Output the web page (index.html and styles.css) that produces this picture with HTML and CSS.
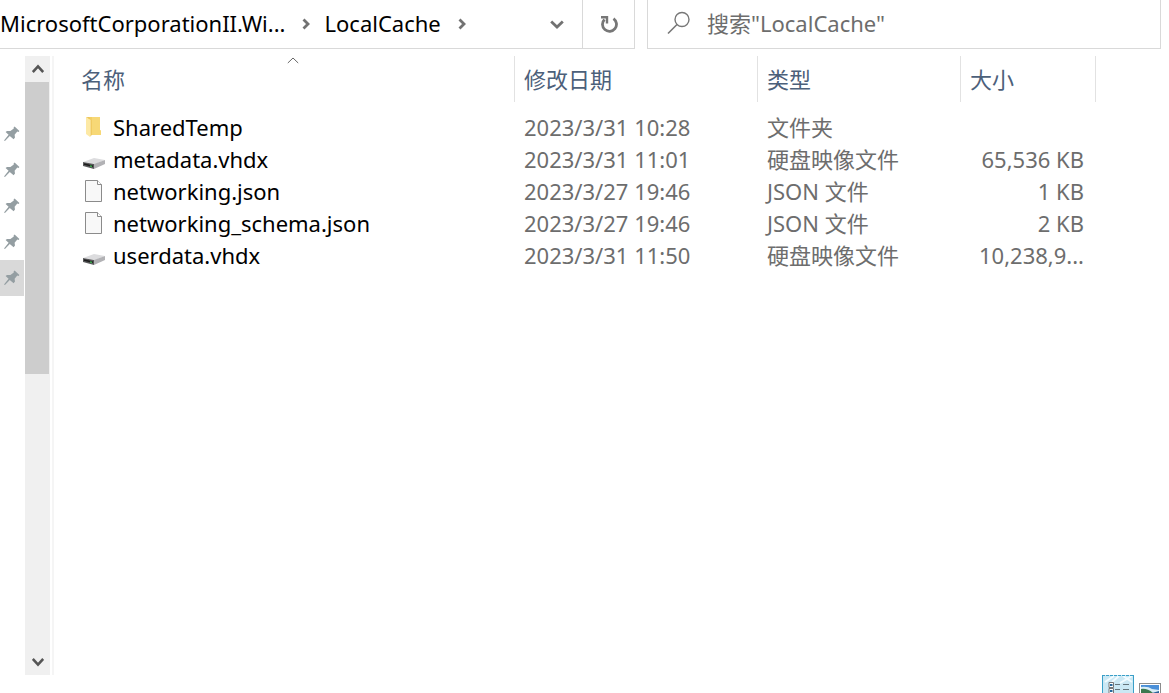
FILE: index.html
```html
<!DOCTYPE html>
<html lang="zh-CN">
<head>
  <meta charset="UTF-8" />
  <meta name="viewport" content="width=device-width, initial-scale=1.0" />
  <title>LocalCache</title>
  <link rel="stylesheet" href="styles.css">
</head>
<body>
  <!-- shared icons -->
  <svg class="sprite" aria-hidden="true">
    <symbol id="pin" viewBox="0 0 16 16">
      <path d="M10.6 0.6 L15.4 5 L14.6 6 L13.3 5.6 L10.6 8.8 L11 11.6 L9.6 13.2 L5.8 9.9 L1.2 14.8 L0.2 15 L0.4 14 L4.6 8.8 L1.6 5.9 L3 4.9 L6.4 5 L9.8 2.6 L9.6 1.4 Z" fill="#949ea2"/>
    </symbol>
    <symbol id="folder" viewBox="0 0 22 22">
      <path d="M5 1 H17 V14 L18 15 V19 H8 L5 18 Z" fill="#f3cf65"/>
      <path d="M9 1 H17 V14 L18 15 V19 H9 Z" fill="#f7d876"/>
      <path d="M3 1 L8 4 V20 L7 21 L3 18 Z" fill="#fde9a5"/>
      <path d="M8 4 V20" stroke="#e9c058" stroke-width=".6"/>
      <path d="M3 1 H6 L8 4 Z" fill="#edc65c"/>
    </symbol>
    <symbol id="drive" viewBox="0 0 22 22">
      <path d="M0 14 L11 10 L22 12 L12 16 Z" fill="#dcdcde"/>
      <path d="M11 16 L22 12 V16 L11 21 Z" fill="#b2b2b5"/>
      <path d="M0 14 L11 16 V21 L0 18 Z" fill="#58585a"/>
      <path d="M1 16 L10 18.200" stroke="#1c1c1c" stroke-width="1.6"/>
      <path d="M7 18 L9 18.500" stroke="#3fae4f" stroke-width="1.3"/>
    </symbol>
    <symbol id="file" viewBox="0 0 22 22">
      <path d="M2.5 .5 H14.5 L18.5 4.5 V21.5 H2.5 Z" fill="#f8f8f8" stroke="#8b8b8b"/>
      <path d="M14.5 .5 V4.5 H18.5" fill="#fff" stroke="#8b8b8b"/>
    </symbol>
  </svg>

  <div class="toolbar">
    <nav class="address">
      <button class="crumb">MicrosoftCorporationII.Wi...</button>
      <svg class="crumb-arrow" width="8" height="12" viewBox="0 0 8 12"><path d="M1.5 1.5 L6 6 L1.5 10.5" fill="none" stroke="#727272" stroke-width="2.8"/></svg>
      <button class="crumb">LocalCache</button>
      <svg class="crumb-arrow" width="8" height="12" viewBox="0 0 8 12"><path d="M1.5 1.5 L6 6 L1.5 10.5" fill="none" stroke="#727272" stroke-width="2.8"/></svg>
      <button class="history" aria-label="以前的位置">
        <svg width="14" height="9" viewBox="0 0 14 9"><path d="M1.2 1.5 L7 7 L12.8 1.5" fill="none" stroke="#727272" stroke-width="2.8"/></svg>
      </button>
      <button class="refresh" aria-label="刷新">
        <svg width="18" height="18" viewBox="0 0 18 18"><path d="M13.5 3.6 A7 7 0 1 1 4.500 4.400" fill="none" stroke="#777" stroke-width="2.8"/><path d="M1 2.200 H7 V8.400" fill="none" stroke="#777" stroke-width="2.4"/></svg>
      </button>
    </nav>
    <label class="search">
      <svg width="24" height="24" viewBox="0 0 24 24"><circle cx="15" cy="8.5" r="7" fill="none" stroke="#777" stroke-width="1.4"/><path d="M10 13.5 L1 22.5" stroke="#777" stroke-width="1.6"/></svg>
      <input class="search-box" type="text" placeholder="搜索&quot;LocalCache&quot;" aria-label="搜索">
    </label>
  </div>

  <div class="content">
    <ul class="pins">
      <li class="pin"><svg width="16" height="16"><use href="#pin"/></svg></li>
      <li class="pin"><svg width="16" height="16"><use href="#pin"/></svg></li>
      <li class="pin"><svg width="16" height="16"><use href="#pin"/></svg></li>
      <li class="pin"><svg width="16" height="16"><use href="#pin"/></svg></li>
      <li class="pin selected"><svg width="16" height="16"><use href="#pin"/></svg></li>
    </ul>
    <div class="scrollbar">
      <button class="scroll-btn" aria-label="向上滚动">
        <svg width="12" height="10" viewBox="0 0 12 10"><path d="M.8 8 L6 2.4 L11.2 8" fill="none" stroke="#555" stroke-width="2.6"/></svg>
      </button>
      <div class="track"><div class="thumb"></div></div>
      <button class="scroll-btn" aria-label="向下滚动">
        <svg width="12" height="10" viewBox="0 0 12 10"><path d="M.8 2 L6 7.6 L11.2 2" fill="none" stroke="#555" stroke-width="2.6"/></svg>
      </button>
    </div>

    <div class="list">
      <table class="files">
        <colgroup>
          <col class="col-name">
          <col class="col-date">
          <col class="col-type">
          <col class="col-size">
        </colgroup>
        <thead>
          <tr>
            <th>
              <svg class="sort" width="12" height="7" viewBox="0 0 12 7"><path d="M.8 6 L6 1 L11.2 6" fill="none" stroke="#666"/></svg>
              名称
            </th>
            <th>修改日期</th>
            <th>类型</th>
            <th>大小</th>
          </tr>
        </thead>
        <tbody>
          <tr>
            <td><div class="name"><svg width="22" height="22"><use href="#folder"/></svg>SharedTemp</div></td>
            <td>2023/3/31 10:28</td>
            <td>文件夹</td>
            <td class="size"></td>
          </tr>
          <tr>
            <td><div class="name"><svg width="22" height="22"><use href="#drive"/></svg>metadata.vhdx</div></td>
            <td>2023/3/31 11:01</td>
            <td>硬盘映像文件</td>
            <td class="size">65,536 KB</td>
          </tr>
          <tr>
            <td><div class="name"><svg width="22" height="22"><use href="#file"/></svg>networking.json</div></td>
            <td>2023/3/27 19:46</td>
            <td>JSON 文件</td>
            <td class="size">1 KB</td>
          </tr>
          <tr>
            <td><div class="name"><svg width="22" height="22"><use href="#file"/></svg>networking_schema.json</div></td>
            <td>2023/3/27 19:46</td>
            <td>JSON 文件</td>
            <td class="size">2 KB</td>
          </tr>
          <tr>
            <td><div class="name"><svg width="22" height="22"><use href="#drive"/></svg>userdata.vhdx</div></td>
            <td>2023/3/31 11:50</td>
            <td>硬盘映像文件</td>
            <td class="size">10,238,9...</td>
          </tr>
        </tbody>
      </table>
    </div>
  </div>

  <div class="statusbar">
    <button class="view active" aria-label="详细信息">
      <svg width="32" height="18" viewBox="0 0 32 18">
        <rect width="32" height="18" fill="#cbe8f4"/>
        <path d="M3 7 L12 1 M10 7 L17 1 M21 1 L30 7 M18 8 L30 1" stroke="#f2fbff" stroke-width="2"/>
        <path d="M0 .5 H32" stroke="#3a9fc8" stroke-dasharray="3 1"/>
        <path d="M.5 0 V18 M31.5 0 V18" stroke="#3a9fc8"/>
        <path d="M7 7.5 H11.500 V12.500 H7 Z M7 13.500 H11.500 V18.500 H7 Z" fill="#fff" stroke="#777"/>
        <path d="M8 10 H10.500 M8 16 H10.500" stroke="#25679b" stroke-width="2"/>
        <path d="M13 9.500 H18 M21 9.500 H27 M13 14.500 H18 M21 14.500 H27" stroke="#65757c"/>
      </svg>
    </button>
    <button class="view" aria-label="大缩略图">
      <svg width="22" height="10" viewBox="0 0 22 10">
        <rect x=".5" y=".5" width="21" height="12" fill="#fff" stroke="#8c8c8c"/>
        <rect x="2" y="2" width="18" height="8" fill="#4a8fd8"/>
        <path d="M2 4 Q9 3 13 6 L20 7 V10 H2 Z" fill="#d8edf6"/>
        <path d="M2 6 Q8 5 14 10 H2 Z" fill="#3d7950"/>
        <path d="M13 10 L20 8 V10 Z" fill="#2c6298"/>
      </svg>
    </button>
  </div>
</body>
</html>
```
FILE: styles.css
```css
* {
  box-sizing: border-box;
}
body {
  margin: 0;
  height: 100vh;
  display: flex;
  flex-direction: column;
  overflow: hidden;
  background: #fff;
  color: #000;
  font-family: "Noto Sans", "Noto Sans CJK SC", sans-serif;
  font-size: 22px;
  line-height: 32px;
}
button {
  border: none;
  background: none;
  padding: 0;
  font: inherit;
  color: inherit;
}
svg {
  display: block;
  flex: none;
}
.sprite {
  display: none;
}

/* address bar + search */
.toolbar {
  display: grid;
  grid-template-columns: 635fr 514fr;
  gap: 12px;
  height: 49px;
  padding-right: 8px;
}
.address {
  display: flex;
  align-items: center;
  border: 1px solid #d9d9d9;
  border-width: 0 1px 1px 0;
}
.crumb {
  padding-bottom: 3px;
  white-space: nowrap;
}
.crumb-arrow {
  margin: 0 14px 0 17px;
}
.history {
  margin-left: auto;
  display: flex;
  justify-content: center;
  width: 50px;
}
.refresh {
  display: flex;
  align-items: center;
  justify-content: center;
  align-self: stretch;
  width: 52px;
  border-left: 1px solid #d9d9d9;
}
.search {
  display: flex;
  align-items: center;
  gap: 16px;
  padding: 0 0 2px 19px;
  border: 1px solid #d9d9d9;
  border-top: none;
}
.search-box {
  flex: 1;
  min-width: 0;
  border: none;
  outline: none;
  padding: 0;
  background: none;
  font: inherit;
}
.search-box::placeholder {
  color: #6d6d6d;
}

/* navigation pane */
.content {
  flex: 1;
  display: flex;
  min-height: 0;
  padding-top: 7px;
}
.pins {
  list-style: none;
  margin: 0;
  padding: 60px 0 0;
  width: 24px;
}
.pin {
  display: flex;
  align-items: center;
  justify-content: center;
  height: 36px;
}
.pin.selected {
  background: #d9d9d9;
}
.scrollbar {
  display: flex;
  flex-direction: column;
  width: 25px;
  margin-left: 1px;
  background: #f0f0f0;
}
.scroll-btn {
  display: flex;
  align-items: center;
  justify-content: center;
  height: 26px;
}
.track {
  flex: 1;
}
.thumb {
  width: 24px;
  height: 51.5%;
  background: #cdcdcd;
}

/* file list */
.list {
  flex: 1;
  margin-left: 2px;
  padding-left: 18px;
  border-left: 2px solid #f5f5f5;
}
.files {
  width: 1024px;
  table-layout: fixed;
  border-collapse: separate;
  border-spacing: 0;
  color: #6d6d6d;
}
.col-name {
  width: 443px;
}
.col-date {
  width: 243px;
}
.col-type {
  width: 203px;
}
.col-size {
  width: 135px;
}
.files th {
  position: relative;
  height: 46px;
  padding: 0 0 0 9px;
  border-right: 1px solid #e2e2e2;
  text-align: left;
  font-weight: normal;
  color: #4c607a;
}
.sort {
  position: absolute;
  top: 1px;
  left: calc(50% - 6px);
}
.files tbody::before {
  content: "";
  display: block;
  height: 9px;
}
.files td {
  height: 32px;
  padding: 0 0 0 9px;
  white-space: nowrap;
}
.files .size {
  padding-right: 12px;
  text-align: right;
}
.name {
  display: flex;
  align-items: center;
  gap: 8px;
  padding-left: 2px;
  color: #000;
}

/* view switch */
.statusbar {
  display: flex;
  align-items: flex-end;
  justify-content: flex-end;
  gap: 5px;
  height: 18px;
  padding-right: 8px;
}
```
